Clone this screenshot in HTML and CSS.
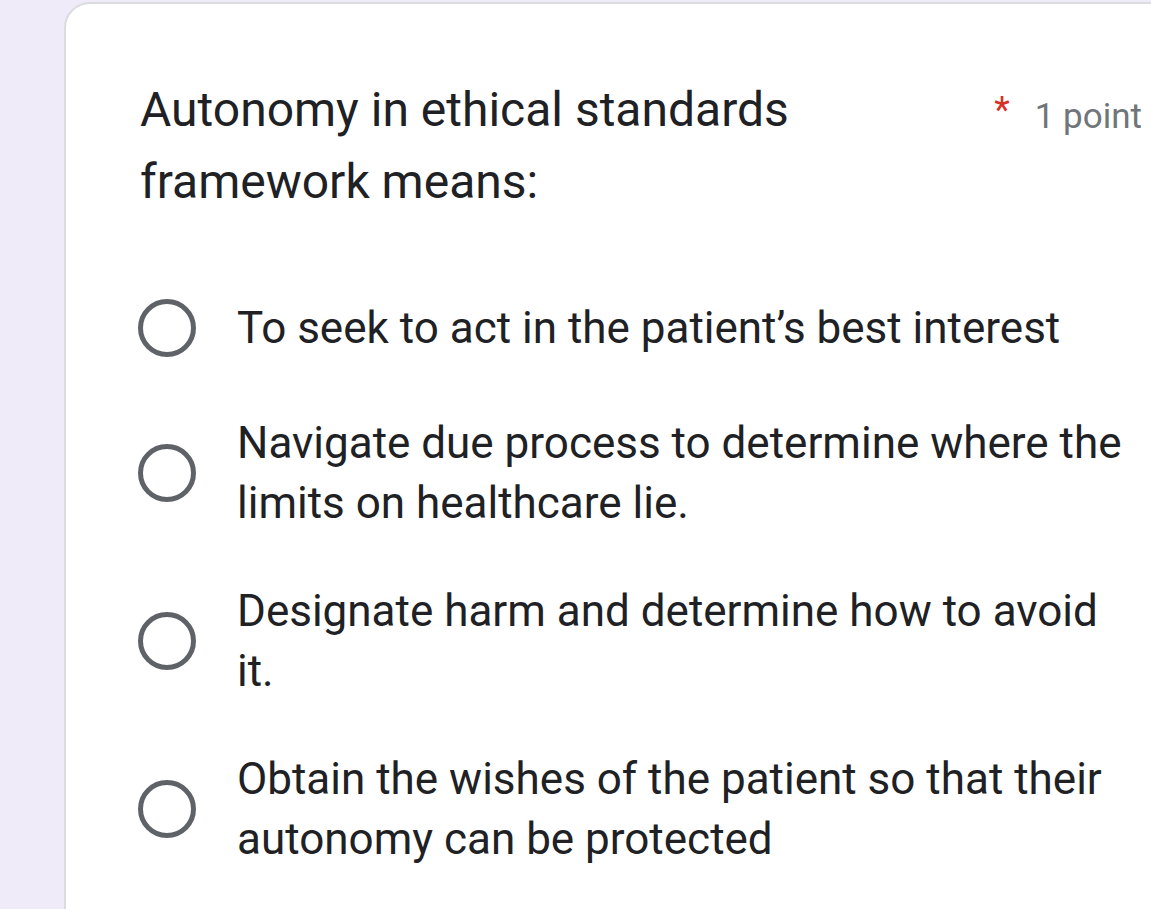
FILE: index.html
```html
<!DOCTYPE html>
<html lang="en">
<head>
<meta charset="utf-8">
<title>Question</title>
<link rel="stylesheet" href="styles.css">
</head>
<body>
<div class="card">
  <div class="content">
    <div class="header">
      <div class="title">Autonomy in ethical standards framework means:</div>
      <span class="required">*</span>
      <span class="points">1 point</span>
    </div>
    <div class="options">
      <div class="option">
        <span class="radio"></span>
        <span class="label">To seek to act in the patient’s best interest</span>
      </div>
      <div class="option">
        <span class="radio"></span>
        <span class="label">Navigate due process to determine where the limits on healthcare lie.</span>
      </div>
      <div class="option">
        <span class="radio"></span>
        <span class="label">Designate harm and determine how to avoid it.</span>
      </div>
      <div class="option">
        <span class="radio"></span>
        <span class="label">Obtain the wishes of the patient so that their autonomy can be protected</span>
      </div>
    </div>
  </div>
</div>
</body>
</html>
```

FILE: styles.css
```css
html, body {
  margin: 0;
  padding: 0;
}
body {
  background: #f0ebf8;
  font-family: Roboto, "Noto Sans", Arial, sans-serif;
  color: #202124;
  overflow: hidden;
  height: 909px;
}
.card {
  margin-left: 64px;
  margin-top: 2px;
  width: 1150px;
  min-height: 980px;
  background: #ffffff;
  border: 2px solid #dadce0;
  border-radius: 26px;
  box-sizing: border-box;
}
.content {
  padding: 70px 0 0 74px;
  width: 1002px;
}
.header {
  display: flex;
  align-items: baseline;
}
.title {
  flex: 1;
  max-width: 800px;
  font-size: 48px;
  line-height: 72px;
  margin-right: auto;
}
.required {
  color: #d93025;
  font-size: 36px;
  line-height: 1;
  margin-right: 25px;
  position: relative;
  top: -4px;
}
.points {
  color: #70757a;
  font-size: 35px;
  white-space: nowrap;
  position: relative;
  top: 2px;
}
.options {
  margin-top: 72px;
  display: flex;
  flex-direction: column;
  gap: 48px;
}
.option {
  display: flex;
  align-items: center;
  min-height: 75px;
}
.radio {
  flex: none;
  width: 58px;
  height: 58px;
  margin-left: -2px;
  border: 5px solid #5f6368;
  border-radius: 50%;
  box-sizing: border-box;
}
.label {
  margin-left: 41px;
  width: 895px;
  font-size: 44px;
  line-height: 60px;
}
```
